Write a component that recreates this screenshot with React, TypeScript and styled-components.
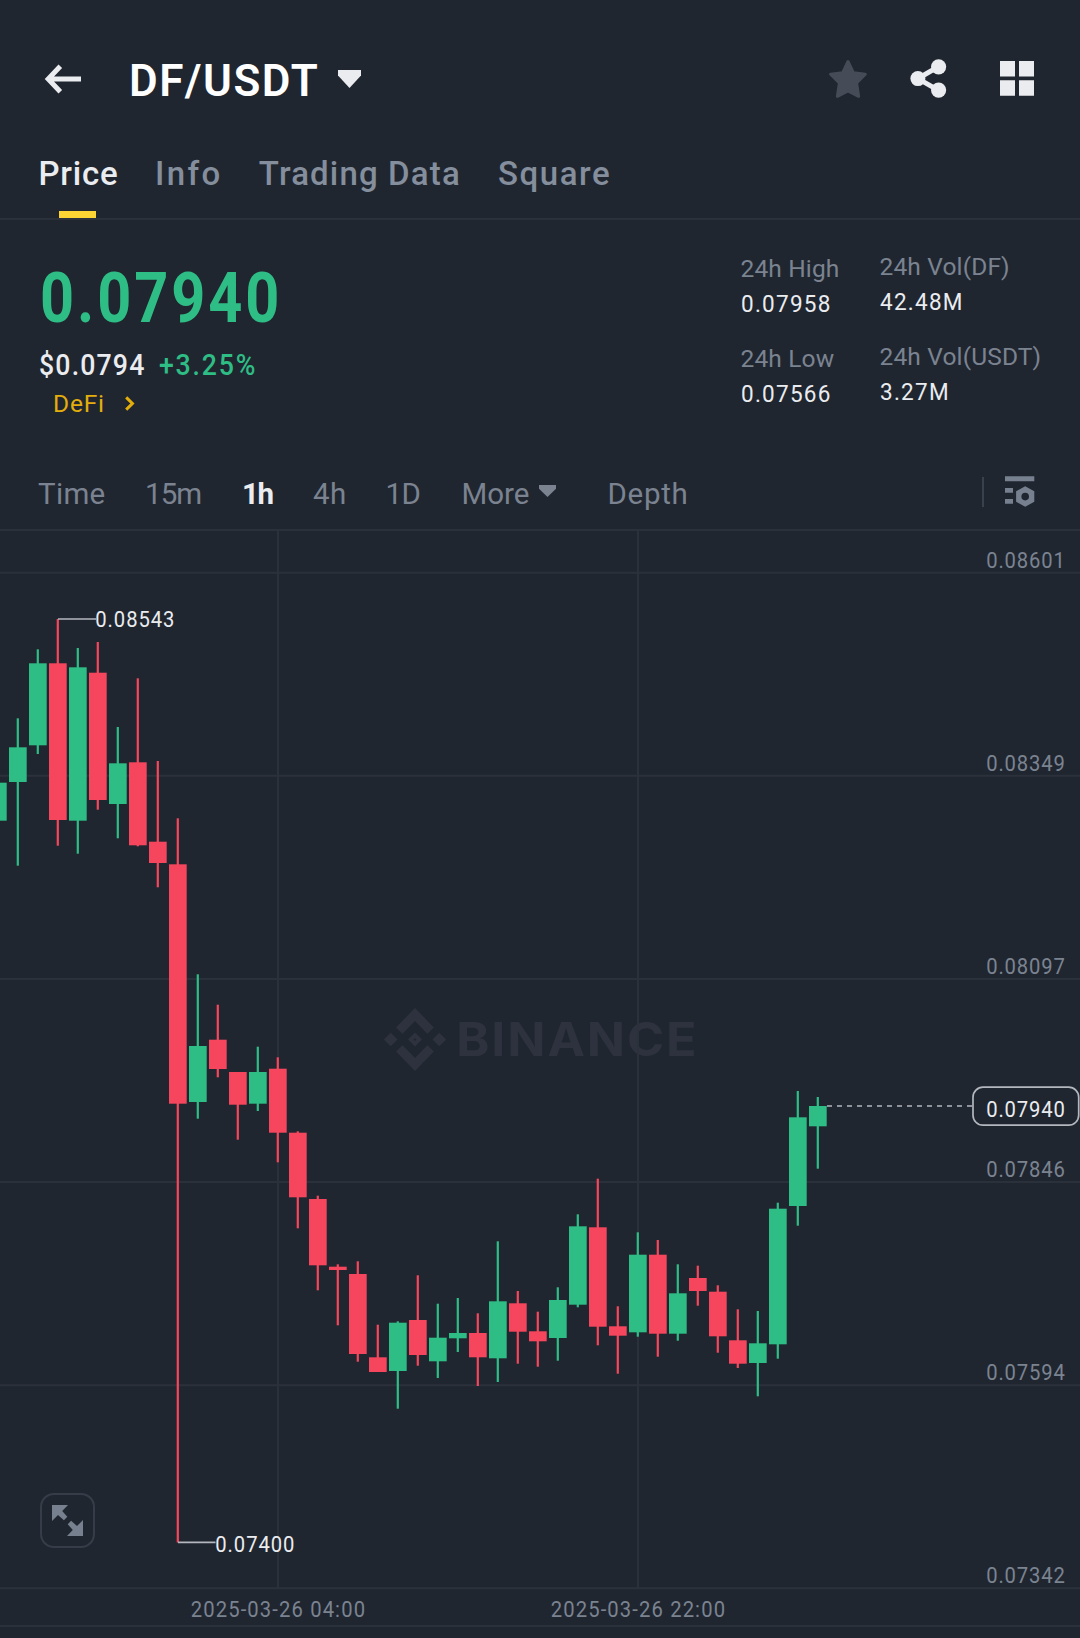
import React from "react";
import styled, { createGlobalStyle } from "styled-components";

const color = {
  bg: "#202630",
  line: "#2b313b",
  text: "#eaecef",
  muted: "#848e9c",
  dim: "#7b8390",
  up: "#2ebd85",
  down: "#f6465d",
  brand: "#fcd535",
  tag: "#e3ae0c",
  watermark: "#2e323e",
};

const GlobalStyle = createGlobalStyle`
  * { box-sizing: border-box; }
  body {
    margin: 0;
    background: ${color.bg};
    font-family: Roboto, "Liberation Sans", sans-serif;
    color: ${color.text};
  }
`;

const Page = styled.main`
  display: flex;
  flex-direction: column;
  width: 1080px;
  height: 1638px;
  overflow: hidden;
  background: ${color.bg};
`;

const Header = styled.header`
  display: flex;
  align-items: center;
  height: 150px;
  padding: 8px 46px 0 44px;
`;

const Title = styled.h1`
  margin: 4px 0 0 47px;
  width: 208.5px;
  font-size: 44px;
  font-weight: 600;
  line-height: 60px;
  letter-spacing: 1.5px;
  color: #fff;
  white-space: nowrap;
`;

const HeaderIcon = styled.span`
  display: flex;
`;

const HeaderActions = styled.div`
  display: flex;
  align-items: center;
  margin: 0 0 1px auto;
`;

const ActionButton = styled.button<{ $gap?: number }>`
  display: flex;
  margin: 0 0 0 ${(p) => p.$gap ?? 0}px;
  padding: 0;
  border: 0;
  background: none;
  color: inherit;
`;

const Tabs = styled.nav`
  display: flex;
  height: 70px;
  padding-left: 38.5px;
  border-bottom: 2px solid ${color.line};
`;

const Tab = styled.div<{ $active?: boolean; $width: number; $tracking: number }>`
  display: flex;
  flex-direction: column;
  flex: none;
  width: ${(p) => p.$width}px;
  font-size: 33px;
  font-weight: 500;
  line-height: 48px;
  letter-spacing: ${(p) => p.$tracking}px;
  white-space: nowrap;
  color: ${(p) => (p.$active ? color.text : color.muted)};
`;

const TabMarker = styled.i`
  width: 37px;
  height: 8px;
  margin: 12.6px 0 0 20.5px;
  background: ${color.brand};
`;

const Summary = styled.section`
  display: flex;
  height: 237px;
  padding-left: 38.5px;
`;

const PriceColumn = styled.div`
  display: flex;
  flex-direction: column;
  width: 702px;
  padding-top: 37.5px;
`;

const LastPrice = styled.div`
  width: max-content;
  margin-left: 1px;
  font-size: 70px;
  font-weight: 700;
  line-height: 80px;
  letter-spacing: 3.4px;
  color: ${color.up};
  transform: scaleX(0.85);
  transform-origin: left;
`;

const FiatRow = styled.div`
  display: flex;
  gap: 4.5px;
  margin-top: 7px;
  font-size: 29px;
  font-weight: 500;
  line-height: 40px;
`;

const Figure = styled.span<{ $up?: boolean }>`
  letter-spacing: ${(p) => (p.$up ? 1.95 : 1.25)}px;
  color: ${(p) => (p.$up ? color.up : color.text)};
  transform: scaleX(0.92);
  transform-origin: left;
`;

const TagLink = styled.div`
  display: flex;
  align-items: center;
  gap: 20px;
  margin-top: 2px;
  padding-left: 14.5px;
  font-size: 24.5px;
  line-height: 34px;
  letter-spacing: 0.8px;
  color: ${color.tag};

  svg { margin-bottom: 1px; }
`;

const StatColumn = styled.div<{ $top: number; $width: number }>`
  display: flex;
  flex-direction: column;
  gap: 25.3px;
  flex: none;
  width: ${(p) => p.$width}px;
  padding-top: ${(p) => p.$top}px;
  white-space: nowrap;
`;

const Stat = styled.dl`
  display: flex;
  flex-direction: column;
  gap: 4.7px;
  margin: 0;
  font-size: 24.5px;
  line-height: 30px;
`;

const StatLabel = styled.dt`
  letter-spacing: 0.15px;
  color: ${color.dim};
`;

const StatValue = styled.dd`
  width: max-content;
  margin: 0;
  letter-spacing: 1.35px;
  transform: scaleX(0.92);
  transform-origin: left;
`;

const Intervals = styled.nav`
  display: flex;
  align-items: center;
  flex: none;
  height: 74px;
  padding: 1px 45px 0 38px;
  border-bottom: 2px solid ${color.line};
`;

const Interval = styled.div<{ $active?: boolean; $width: number; $tracking?: number }>`
  display: flex;
  align-items: center;
  gap: 10px;
  flex: none;
  width: ${(p) => p.$width}px;
  font-size: 29.5px;
  font-weight: ${(p) => (p.$active ? 700 : 400)};
  line-height: 40px;
  letter-spacing: ${(p) => p.$tracking ?? 0.3}px;
  color: ${(p) => (p.$active ? color.text : color.dim)};

  svg { margin-bottom: 6px; }
`;

const IntervalTools = styled.div`
  display: flex;
  align-items: center;
  gap: 21px;
  margin: 0 0 4px auto;
`;

const ToolDivider = styled.i`
  width: 2.5px;
  height: 30px;
  background: #37424c;
`;

const ChartArea = styled.section`
  position: relative;
  flex: none;
  height: 1107px;

  > svg { display: block; }
`;

const ExpandButton = styled.button`
  position: absolute;
  left: 40px;
  top: 962px;
  display: flex;
  align-items: center;
  justify-content: center;
  width: 55px;
  height: 55px;
  padding: 0;
  border: 2px solid #363d48;
  border-radius: 14px;
  background: none;
`;

const Label = styled.text<{ $bright?: boolean }>`
  font-size: 22px;
  fill: ${(p) => (p.$bright ? color.text : color.dim)};
`;

const Watermark = styled.text`
  font-family: Inter, "Open Sans", sans-serif;
  font-size: 46.5px;
  font-weight: 700;
  fill: ${color.watermark};
`;

type Candle = [up: number, high: number, open: number, close: number, low: number];

const candles: Candle[] = [
  [1, 782.7, 782.7, 820.7, 820.7],
  [1, 718.3, 747.3, 782, 865.7],
  [1, 649.3, 663.3, 745.3, 754],
  [0, 619, 663.3, 820, 845.7],
  [1, 648, 667.3, 820.7, 853.7],
  [0, 642, 672.7, 800, 809.7],
  [1, 727, 763.3, 804, 838.3],
  [0, 678.3, 762.3, 845.3, 846.3],
  [0, 761, 841.7, 863, 887.3],
  [0, 818.3, 864.3, 1103.7, 1542.5],
  [1, 974.3, 1046, 1102, 1118.7],
  [0, 1004.7, 1039.7, 1069, 1077.3],
  [0, 1072, 1072, 1104.7, 1139.7],
  [1, 1046.7, 1072, 1103.7, 1111],
  [0, 1057.3, 1068.7, 1132.7, 1162.3],
  [0, 1131.3, 1132.7, 1197.3, 1228.3],
  [0, 1195.7, 1199, 1265.3, 1290.3],
  [0, 1264.3, 1266.7, 1270, 1325.3],
  [0, 1261.3, 1274, 1354, 1361.7],
  [0, 1324.7, 1357.3, 1372, 1372],
  [1, 1321.3, 1322.7, 1371, 1408.7],
  [0, 1275.3, 1320, 1355, 1365.7],
  [1, 1303.7, 1337.7, 1361.3, 1378],
  [1, 1298, 1333, 1338.3, 1352],
  [0, 1313.3, 1333, 1357.3, 1386],
  [1, 1241.3, 1301.3, 1358.3, 1382],
  [0, 1291, 1303.3, 1331.7, 1363.7],
  [0, 1311.7, 1331.3, 1341.3, 1366.7],
  [1, 1287.3, 1300, 1338, 1360.7],
  [1, 1214.3, 1226.3, 1304.7, 1307.3],
  [0, 1178.7, 1227.3, 1326.7, 1345.3],
  [0, 1306.3, 1326.3, 1335.7, 1373.7],
  [1, 1232.3, 1254.7, 1332.3, 1336.7],
  [0, 1240, 1254.7, 1333.7, 1356.7],
  [1, 1264.3, 1293.3, 1333.7, 1340.7],
  [0, 1265.7, 1278, 1291, 1305.7],
  [0, 1285.3, 1291.7, 1336.3, 1352.7],
  [0, 1309.3, 1340.3, 1363.7, 1368],
  [1, 1311, 1343.3, 1363, 1396.3],
  [1, 1202.7, 1208.7, 1344.3, 1358.7],
  [1, 1091, 1117.3, 1206, 1225.7],
  [1, 1097, 1106, 1126.3, 1168.7],
];

const priceLevels = ["0.08601", "0.08349", "0.08097", "0.07846", "0.07594", "0.07342"];
const levelY = (i: number) => 572.7 + i * 203.12;

const times = [
  { x: 278, label: "2025-03-26 04:00" },
  { x: 638, label: "2025-03-26 22:00" },
];

const tabs = [
  { label: "Price", width: 116.5, tracking: 0.8, active: true },
  { label: "Info", width: 103.8, tracking: 2.4 },
  { label: "Trading Data", width: 239.2, tracking: 1.15 },
  { label: "Square", width: 130, tracking: 1.55 },
];

const intervals = [
  { label: "Time", width: 107 },
  { label: "15m", width: 97, tracking: -0.9 },
  { label: "1h", width: 71, tracking: -1.4, active: true },
  { label: "4h", width: 72.5 },
  { label: "1D", width: 76, tracking: -0.5 },
  { label: "More", width: 146, tracking: 0, menu: true },
  { label: "Depth", width: 90, tracking: 0.7 },
];

const BackIcon = () => (
  <svg width="38" height="32" viewBox="44 63 38 32" fill="none" stroke={color.text} strokeWidth="5">
    <path d="M60.3 66.3 48.2 79l12.1 12.7M48 79h33" />
  </svg>
);

const CaretIcon = ({ width, height }: { width: number; height: number }) => (
  <svg width={width} height={height} viewBox="0 0 23 18" preserveAspectRatio="none" fill="currentColor">
    <path d="M0 0h23v5.6L11.5 18 0 5.6z" />
  </svg>
);

const StarIcon = () => (
  <svg width="38" height="39" viewBox="828.5 59.5 38 39" fill="#464c57" stroke="#464c57" strokeWidth="3" strokeLinejoin="round">
    <path d="M847.5 62l5.3 11.2 12 1.6-8.7 8.6 2 13.4-10.6-5.4-10.6 5.4 2-13.4-8.8-8.6 12.1-1.6z" />
  </svg>
);

const ShareIcon = () => (
  <svg width="37" height="39" viewBox="909.5 59 37 39" fill={color.text}>
    <path d="M938 66.7 917.4 78.6 938 90.3" fill="none" stroke={color.text} strokeWidth="5" />
    <circle cx="917.4" cy="78.6" r="7.5" />
    <circle cx="938.1" cy="66.8" r="7.6" />
    <circle cx="938.1" cy="90.1" r="7.6" />
  </svg>
);

const GridIcon = () => (
  <svg width="34" height="35" viewBox="0 0 34 35" fill={color.text}>
    <path d="M0 0h15v15.5H0zM19 0h15v15.5H19zM0 19.2h15v15.5H0zM19 19.2h15v15.5H19z" />
  </svg>
);

const ChevronIcon = () => (
  <svg width="10" height="15" viewBox="0 0 10 15" fill="none" stroke={color.tag} strokeWidth="3">
    <path d="M1.2 1.4 7.4 7.5l-6.2 6.1" />
  </svg>
);

const ChartSettingsIcon = () => (
  <svg width="30" height="31" viewBox="0 0 30 31" fill="#76808f" fillRule="evenodd">
    <path d="M0 .3h29.3v5H0zM0 12h8v4.7H0zM0 23h8v4.7H0z" />
    <path d="M20.2 10.3 29.3 15.3v10.4l-9.1 5-9.1-5V15.3zM20.2 16.8a3.8 3.8 0 1 0 0 7.6 3.8 3.8 0 0 0 0-7.6z" />
  </svg>
);

const ExpandIcon = () => (
  <svg width="31" height="31" viewBox="0 0 31 31" fill="#76808f">
    <path d="M0 0h16l-5.8 6 5.1 5.8-3.4 3.4L6 10 0 16z" />
    <path d="M31 31H15l5.8-6-5.1-5.8 3.4-3.4L25 21l6-6z" />
  </svg>
);

/* Figures in the chart are condensed a little and tracked out to a fixed length. */
const SQUEEZE = 0.92;

const ChartText = ({ x, y, length, bright, children }: {
  x: number;
  y: number;
  length: number;
  bright?: boolean;
  children: string;
}) => (
  <Label
    $bright={bright}
    transform={`translate(${x} ${y}) scale(${SQUEEZE} 1)`}
    textLength={length / SQUEEZE}
  >
    {children}
  </Label>
);

const Chart = () => (
  <svg width="1080" height="1107" viewBox="0 531 1080 1107">
    <g fill={color.watermark} fillRule="evenodd">
      <path d="M415 1008l18.8 19.4-6.4 6.3L415 1021l-12.6 12.7-6.4-6.3zM415 1071l-18.9-19.4 6.4-6.3L415 1058l12.5-12.7 6.4 6.3z" />
      <path d="M390.7 1032.7l6.8 6.8-6.8 6.8-6.8-6.8zM439.3 1032.7l6.8 6.8-6.8 6.8-6.8-6.8z" />
      <path d="M415 1032.5l7 7-7 7-7-7zM415 1038l-1.5 1.5 1.5 1.5 1.5-1.5z" />
    </g>
    <g transform="translate(456.2 1056) scale(1.08 1)">
      <Watermark textLength="222.5">BINANCE</Watermark>
    </g>

    <g stroke={color.line} strokeWidth="2">
      {priceLevels.map((p, i) => (
        <line key={p} x1="0" x2="1080" y1={levelY(i)} y2={levelY(i)} />
      ))}
      <line x1="0" x2="1080" y1="1626" y2="1626" />
      {times.map((t) => (
        <line key={t.x} x1={t.x} x2={t.x} y1="531" y2="1588" />
      ))}
    </g>

    {candles.map(([up, high, top, bottom, low], i) => {
      const cx = 17.8 + (i - 1) * 20;
      return (
        <g key={i} fill={up ? color.up : color.down}>
          <rect x={cx - 1.1} y={high} width="2.2" height={low - high} />
          <rect x={cx - 8.8} y={top} width="17.7" height={bottom - top} />
        </g>
      );
    })}

    {priceLevels.map((p, i) => (
      <ChartText key={p} x={986.2} y={levelY(i) - 5} length={78.6}>{p}</ChartText>
    ))}
    {times.map((t) => (
      <ChartText key={t.label} x={t.x - 87.3} y={1616.5} length={174.3}>{t.label}</ChartText>
    ))}

    <g stroke="#b3b7be" strokeWidth="1.7" fill="none">
      <path d="M58 619h38M178 1542.3h37.5" />
      <path d="M827 1106h145" strokeDasharray="5 5" />
      <rect x="973" y="1087.2" width="105.7" height="38" rx="10" />
    </g>
    <ChartText bright x={95.2} y={627.3} length={79.3}>0.08543</ChartText>
    <ChartText bright x={215.2} y={1551.5} length={79.3}>0.07400</ChartText>
    <ChartText bright x={986.2} y={1117.4} length={78.6}>0.07940</ChartText>
  </svg>
);

export default function App() {
  return (
    <Page>
      <GlobalStyle />
      <Header>
        <HeaderIcon><BackIcon /></HeaderIcon>
        <Title>DF/USDT</Title>
        <HeaderIcon><CaretIcon width={23} height={18} /></HeaderIcon>
        <HeaderActions>
          <ActionButton><StarIcon /></ActionButton>
          <ActionButton $gap={43}><ShareIcon /></ActionButton>
          <ActionButton $gap={53.5}><GridIcon /></ActionButton>
        </HeaderActions>
      </Header>

      <Tabs>
        {tabs.map((t) => (
          <Tab key={t.label} $active={t.active} $width={t.width} $tracking={t.tracking}>
            {t.label}
            {t.active && <TabMarker />}
          </Tab>
        ))}
      </Tabs>

      <Summary>
        <PriceColumn>
          <LastPrice>0.07940</LastPrice>
          <FiatRow>
            <Figure>$0.0794</Figure>
            <Figure $up>+3.25%</Figure>
          </FiatRow>
          <TagLink>
            DeFi
            <ChevronIcon />
          </TagLink>
        </PriceColumn>
        <StatColumn $top={34.3} $width={139}>
          <Stat><StatLabel>24h High</StatLabel><StatValue>0.07958</StatValue></Stat>
          <Stat><StatLabel>24h Low</StatLabel><StatValue>0.07566</StatValue></Stat>
        </StatColumn>
        <StatColumn $top={32.3} $width={180}>
          <Stat><StatLabel>24h Vol(DF)</StatLabel><StatValue>42.48M</StatValue></Stat>
          <Stat><StatLabel>24h Vol(USDT)</StatLabel><StatValue>3.27M</StatValue></Stat>
        </StatColumn>
      </Summary>

      <Intervals>
        {intervals.map((t) => (
          <Interval key={t.label} $active={t.active} $width={t.width} $tracking={t.tracking}>
            {t.label}
            {t.menu && <CaretIcon width={17} height={12} />}
          </Interval>
        ))}
        <IntervalTools>
          <ToolDivider />
          <ChartSettingsIcon />
        </IntervalTools>
      </Intervals>

      <ChartArea>
        <Chart />
        <ExpandButton><ExpandIcon /></ExpandButton>
      </ChartArea>
    </Page>
  );
}
